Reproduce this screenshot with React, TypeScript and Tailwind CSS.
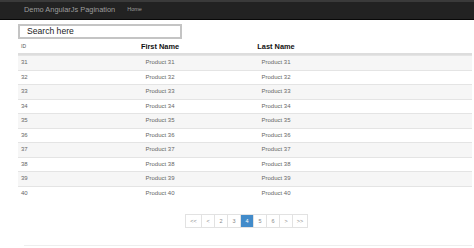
const rows = [31, 32, 33, 34, 35, 36, 37, 38, 39, 40];
const pages = ['<<', '<', '2', '3', '4', '5', '6', '>', '>>'];

export default function App() {
  return (
    <div className="h-[248px] w-[474px] overflow-hidden bg-white font-['Liberation_Sans',Arial,sans-serif] text-[#333]">
      {/* navbar */}
      <div className="flex h-[20px] items-center border-b border-[#080808] bg-[#222] pl-[24px] shadow-[inset_0_2px_0_#3a3a3a]">
        <span className="text-[7.4px] text-[#9d9d9d]">Demo AngularJs Pagination</span>
        <span className="ml-[12px] text-[5.5px] text-[#9d9d9d]">Home</span>
      </div>

      <div className="pl-[18px] pr-[2px]">
        {/* search */}
        <div className="mt-[4px] flex h-[15px] w-[164px] items-center border-2 border-[#c4c4c4] pl-[7px] text-[8.6px] text-[#222]">
          Search here
        </div>

        {/* table */}
        <div className="mt-[1px] w-[454px]">
          <div className="flex h-[15px] items-center border-b-2 border-[#ddd]">
            <div className="w-[84px] pl-[3px] text-[5px] text-[#555]">ID</div>
            <div className="w-[116px] text-center text-[7.4px] font-bold text-[#111]">First Name</div>
            <div className="w-[116px] text-center text-[7.4px] font-bold text-[#111]">Last Name</div>
            <div className="flex-1" />
          </div>
          {rows.map((n, i) => (
            <div
              key={n}
              className={`flex h-[14.5px] items-center border-t border-[#e4e4e4] text-[6px] text-[#666] ${i % 2 === 0 ? 'bg-[#f6f6f6]' : 'bg-white'}`}
            >
              <div className="w-[84px] pl-[3px]">{n}</div>
              <div className="w-[116px] text-center">Product {n}</div>
              <div className="w-[116px] text-center">Product {n}</div>
              <div className="flex-1" />
            </div>
          ))}
        </div>

        {/* pagination */}
        <div className="mt-[14px] flex justify-center pl-[3px]">
          <div className="flex h-[14px] border border-[#e2e2e2] text-[5.5px] text-[#888]">
            {pages.map((p) => (
              <div
                key={p}
                className={`flex items-center justify-center border-l border-[#e2e2e2] first:border-l-0 ${
                  p.length === 2 ? 'w-[15px]' : 'w-[13px]'
                } ${p === '4' ? 'bg-[#428bca] text-white' : 'bg-white'}`}
              >
                {p}
              </div>
            ))}
          </div>
        </div>

        <div className="ml-[6px] mt-[17px] border-t border-[#eee]" />
      </div>
    </div>
  );
}
